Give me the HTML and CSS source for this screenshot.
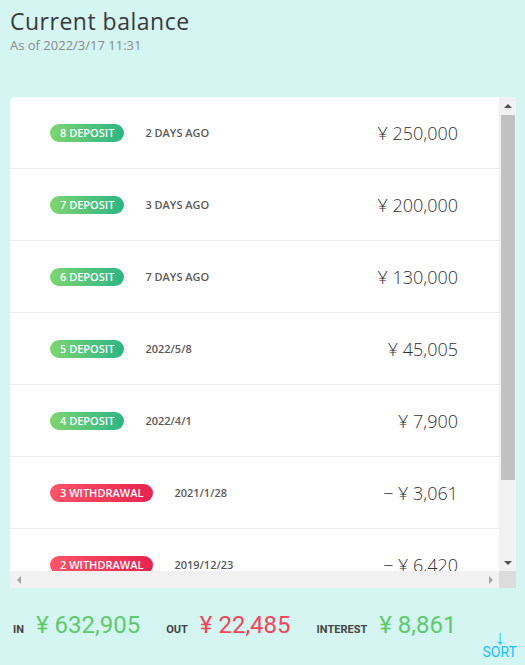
FILE: index.html
```html
<!DOCTYPE html>
<html>
<head>
<meta charset="utf-8">
<link rel="stylesheet" href="styles.css">
</head>
<body>
<header class="header">
  <h1 class="title">Current balance</h1>
  <div class="subtitle">As of 2022/3/17 11:31</div>
</header>
<section class="card">
  <main class="list">
    <div class="row"><span class="badge deposit">8 Deposit</span><span class="date">2 days ago</span><span class="amount">¥ 250,000</span></div>
    <div class="row"><span class="badge deposit">7 Deposit</span><span class="date">3 days ago</span><span class="amount">¥ 200,000</span></div>
    <div class="row"><span class="badge deposit">6 Deposit</span><span class="date">7 days ago</span><span class="amount">¥ 130,000</span></div>
    <div class="row"><span class="badge deposit">5 Deposit</span><span class="date">2022/5/8</span><span class="amount">¥ 45,005</span></div>
    <div class="row"><span class="badge deposit">4 Deposit</span><span class="date">2022/4/1</span><span class="amount">¥ 7,900</span></div>
    <div class="row"><span class="badge withdrawal">3 Withdrawal</span><span class="date">2021/1/28</span><span class="amount">− ¥ 3,061</span></div>
    <div class="row"><span class="badge withdrawal">2 Withdrawal</span><span class="date">2019/12/23</span><span class="amount">− ¥ 6,420</span></div>
    <div class="row"><span class="badge withdrawal">1 Withdrawal</span><span class="date">2019/3/2</span><span class="amount">− ¥ 13,004</span></div>
  </main>
  <div class="vbar">
    <div class="sbtn"><span class="tri up"></span></div>
    <div class="vtrack"><div class="vthumb"></div></div>
    <div class="sbtn"><span class="tri down"></span></div>
  </div>
  <div class="hbar">
    <div class="sbtn"><span class="tri left"></span></div>
    <div class="htrack"></div>
    <div class="sbtn"><span class="tri right"></span></div>
  </div>
  <div class="corner"></div>
</section>
<footer class="footer">
  <div class="stat"><span class="label">IN</span><span class="value in">¥ 632,905</span></div>
  <div class="stat"><span class="label">OUT</span><span class="value out">¥ 22,485</span></div>
  <div class="stat"><span class="label">INTEREST</span><span class="value in">¥ 8,861</span></div>
  <button class="sort"><span class="arrow">↓</span><span class="sort-text">SORT</span></button>
</footer>
</body>
</html>
```
FILE: styles.css
```css
html, body {
  margin: 0;
  padding: 0;
  background: #d4f5f2;
  font-family: "Open Sans", "Liberation Sans", sans-serif;
}

.header {
  padding: 6px 10px 0 10px;
  height: 97px;
  box-sizing: border-box;
}

.title {
  margin: 0;
  font-size: 23px;
  font-weight: 500;
  letter-spacing: 0.5px;
  color: #3a3a3a;
  line-height: 30px;
}

.subtitle {
  font-size: 13px;
  color: #8a8a8a;
  line-height: 18px;
}

.card {
  margin: 0 9px 0 10px;
  display: grid;
  grid-template-columns: 1fr 17px;
  grid-template-rows: 474px 17px;
  background: #fff;
  border-top-left-radius: 6px;
  overflow: hidden;
}

.list {
  overflow: hidden;
}

.row {
  display: flex;
  align-items: center;
  height: 71px;
  border-bottom: 1px solid #ececec;
  padding: 0 41px 0 40px;
}

.badge {
  display: inline-block;
  height: 18px;
  line-height: 18px;
  padding: 0 10px;
  border-radius: 9px;
  color: #fff;
  font-size: 11px;
  font-weight: 600;
  text-transform: uppercase;
  white-space: nowrap;
}

.badge.deposit {
  background: linear-gradient(to right, #7ed56f, #2db585);
}

.badge.withdrawal {
  background: linear-gradient(to right, #fb5468, #e8234e);
}

.date {
  margin-left: 21px;
  font-size: 11px;
  font-weight: 600;
  color: #5a5a5a;
  text-transform: uppercase;
}

.amount {
  margin-left: auto;
  font-size: 18px;
  font-weight: 300;
  color: #333;
  white-space: nowrap;
}

/* scrollbars */
.vbar {
  display: flex;
  flex-direction: column;
  background: #f1f1f1;
}

.hbar {
  display: flex;
  background: #f1f1f1;
}

.corner {
  background: #dcdcdc;
}

.sbtn {
  width: 17px;
  height: 17px;
  flex: none;
  display: flex;
  align-items: center;
  justify-content: center;
}

.vtrack {
  flex: 1;
}

.htrack {
  flex: 1;
}

.vthumb {
  height: 365px;
  margin: 1px 1px 0 2px;
  background: #c1c1c1;
}

.tri {
  width: 0;
  height: 0;
  border-style: solid;
}

.tri.up {
  border-width: 0 4px 4px 4px;
  border-color: transparent transparent #505050 transparent;
}

.tri.down {
  border-width: 4px 4px 0 4px;
  border-color: #505050 transparent transparent transparent;
}

.tri.left {
  border-width: 4px 4px 4px 0;
  border-color: transparent #a3a3a3 transparent transparent;
}

.tri.right {
  border-width: 4px 0 4px 4px;
  border-color: transparent transparent transparent #a3a3a3;
}

/* footer */
.footer {
  display: flex;
  align-items: center;
  padding: 0 10px 0 13px;
  height: 77px;
  box-sizing: border-box;
}

.stat {
  flex: none;
  display: flex;
  align-items: baseline;
  gap: 12px;
  margin-right: 26px;
  margin-top: -3px;
}

.label {
  font-family: Roboto, "Liberation Sans", sans-serif;
  font-size: 11px;
  line-height: 16px;
  font-weight: 700;
  color: #444;
  white-space: nowrap;
}

.value {
  font-family: Roboto, "Liberation Sans", sans-serif;
  font-size: 24px;
  line-height: 30px;
  font-weight: 400;
  white-space: nowrap;
}

.value.in { color: #5fca6c; }
.value.out { color: #f0475a; }

.sort {
  flex: none;
  margin-left: auto;
  border: 0;
  background: none;
  padding: 0;
  display: flex;
  flex-direction: column;
  align-items: center;
  color: #1ec0f2;
  font-family: Roboto, "Liberation Sans", sans-serif;
  margin-top: 34px;
  margin-right: 7px;
}

.arrow {
  font-size: 20px;
  line-height: 16px;
}

.sort-text {
  font-size: 14px;
  line-height: 14px;
}
```
